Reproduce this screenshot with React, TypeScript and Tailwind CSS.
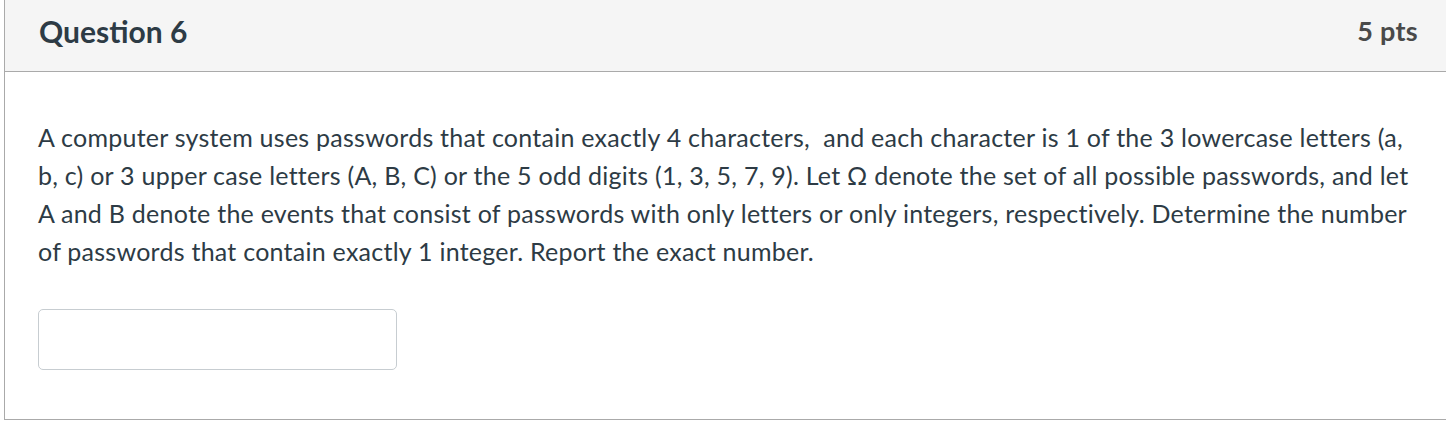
export default function App() {
  return (
    <div className="w-[1446px] h-[430px] overflow-hidden bg-white font-['Lato','Noto_Sans',sans-serif] text-[#2d3b45]">
      <div className="ml-[4px] w-[1460px] border-l border-b border-[#aaaaaa]">
        <div className="h-[72px] flex items-center justify-between pl-[34px] pr-[46px] pb-[10px] bg-[#f5f5f5] border-b border-[#aaaaaa]">
          <h3 className="text-[30px] font-bold leading-none">Question 6</h3>
          <span className="text-[27px] font-bold text-[#4a4a4a] leading-none tracking-[0.3px]">5 pts</span>
        </div>
        <div className="pl-[33px] pt-[46px] pb-[49px]">
          <p className="max-w-[1380px] text-[25px] leading-[38px] tracking-[0.25px]">
            A computer system uses passwords that contain exactly 4 characters,&nbsp; and each character is 1 of the 3 lowercase letters (a, b, c) or 3 upper case letters (A, B, C) or the 5 odd digits (1, 3, 5, 7, 9). Let Ω denote the set of all possible passwords, and let A and B denote the events that consist of passwords with only letters or only integers, respectively. Determine the number of passwords that contain exactly 1 integer. Report the exact number.
          </p>
          <input
            type="text"
            className="mt-[39px] block w-[359px] h-[61px] border border-[#c7cdd1] rounded-[5px] bg-white"
          />
        </div>
      </div>
    </div>
  );
}
